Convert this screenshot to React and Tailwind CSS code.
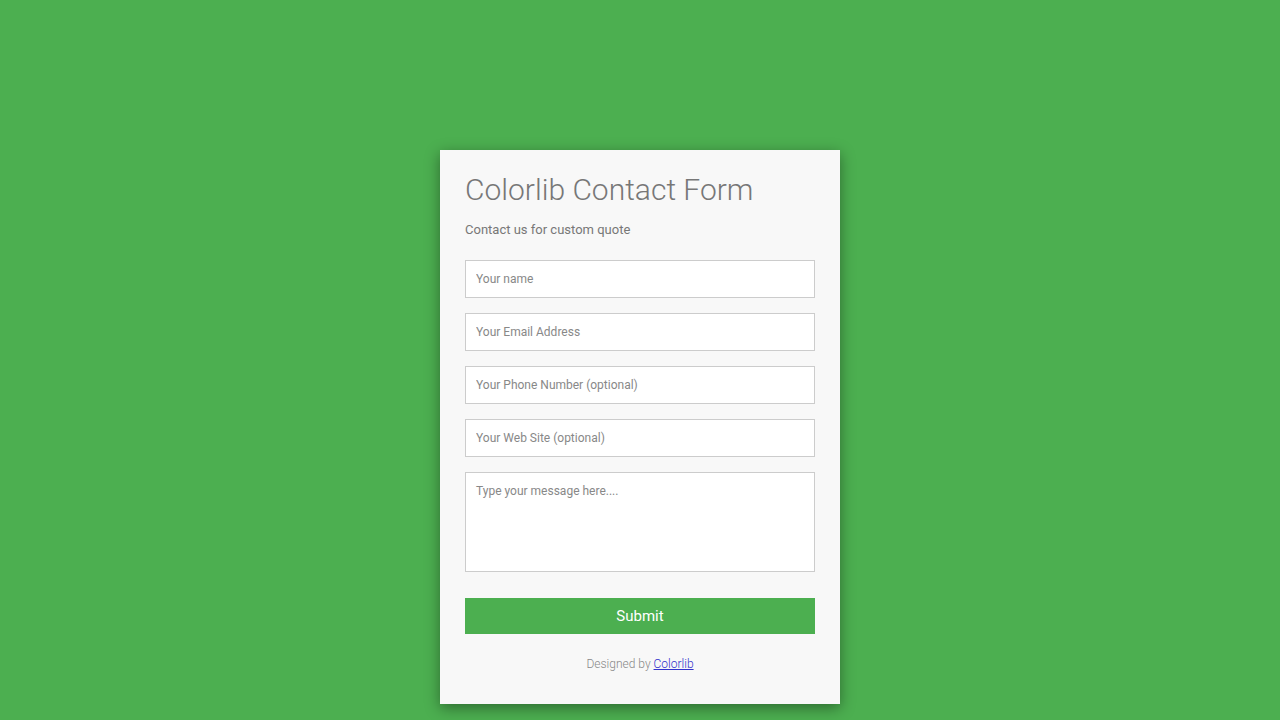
export default function App() {
  const font = { fontFamily: "Roboto, 'Liberation Sans', sans-serif" };
  const inputCls =
    "block w-full h-[38px] border border-[#cccccc] bg-white px-[10px] text-[12px] text-[#555] placeholder:text-[#888] outline-none";
  return (
    <div className="min-h-[720px] w-full bg-[#4caf50] pt-[150px]" style={font}>
      <div className="mx-auto w-[400px] bg-[#f8f8f8] px-[25px] shadow-[0_4px_14px_rgba(0,0,0,0.4)]">
        <div className="pt-[22px] pb-[32px]">
          <h1 className="text-[30px] leading-[36px] font-light text-[#777]">Colorlib Contact Form</h1>
          <p className="mt-[13px] text-[13px] leading-[18px] text-[#777]">Contact us for custom quote</p>
          <form className="mt-[21px] flex flex-col gap-[15px]" onSubmit={(e) => e.preventDefault()}>
            <input className={inputCls} placeholder="Your name" />
            <input className={inputCls} placeholder="Your Email Address" />
            <input className={inputCls} placeholder="Your Phone Number (optional)" />
            <input className={inputCls} placeholder="Your Web Site (optional)" />
            <textarea
              className="block w-full h-[100px] resize-none border border-[#cccccc] bg-white px-[10px] pt-[10px] text-[12px] leading-[16px] text-[#555] placeholder:text-[#888] outline-none"
              placeholder="Type your message here...."
            />
            <button
              type="submit"
              className="mt-[11px] h-[36px] w-full bg-[#4caf50] text-[15px] text-white"
            >
              Submit
            </button>
          </form>
          <p className="mt-[22px] text-center text-[12px] leading-[16px] font-light text-[#888]">
            Designed by{" "}
            <a href="#" className="text-[#3333cc] underline">
              Colorlib
            </a>
          </p>
        </div>
      </div>
    </div>
  );
}
